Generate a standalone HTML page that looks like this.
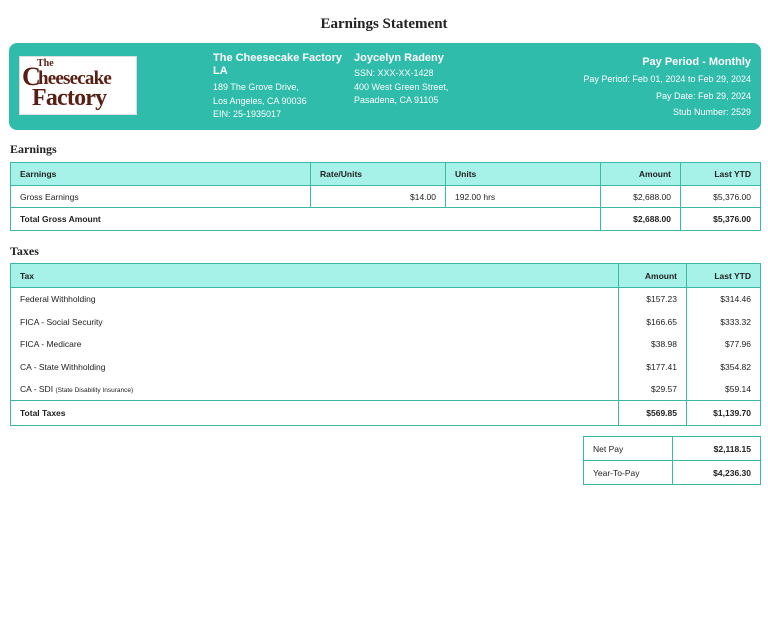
<!DOCTYPE html>
<html><head><meta charset="utf-8"><style>
*{margin:0;padding:0;box-sizing:border-box}
body{width:768px;height:639px;background:#fff;font-family:"Liberation Sans",sans-serif;color:#222;position:relative;overflow:hidden}
.abs{position:absolute}
h1{position:absolute;left:0;width:768px;top:16px;text-align:center;font:bold 15px "Liberation Serif",serif;color:#222}
.hdr{left:9px;top:43px;width:752px;height:87px;background:#2fbcaa;border-radius:8px;color:#fff}
.logo{left:10px;top:13px;width:118px;height:59px;background:#fff;border:1px solid #ddd;color:#5a1f14;font-family:"Liberation Serif",serif;font-weight:bold}
.w{font-size:9px;line-height:13.5px}
.wb{font-size:11px;font-weight:bold;line-height:13px}
h2{position:absolute;left:10px;font:bold 12px "Liberation Serif",serif;color:#222}
table{position:absolute;border-collapse:collapse;font-size:8.5px;color:#222}
td{border:1px solid #3bb8a6;padding:0 9px;white-space:nowrap}
th{border:1px solid #3bb8a6;padding:0 9px;background:#a6f1e8;font-weight:bold;text-align:left}
.r{text-align:right}
.b td{font-weight:bold}
.nb td{border-top:none;border-bottom:none}
</style></head><body>
<h1>Earnings Statement</h1>
<div class="abs hdr">
 <div class="abs logo">
  <div class="abs" style="left:17px;top:1px;font-size:10px">The</div>
  <div class="abs" style="left:2px;top:5px;font-size:26px;letter-spacing:-1px">C</div>
  <div class="abs" style="left:18px;top:11px;font-size:19px;letter-spacing:-0.8px">heesecake</div>
  <div class="abs" style="left:12px;top:28px;font-size:24px;letter-spacing:-0.8px">Factory</div>
 </div>
 <div class="abs" style="left:204px;top:9px;width:140px">
  <div class="wb">The Cheesecake Factory LA</div>
  <div class="w" style="margin-top:3px">189 The Grove Drive,<br>Los Angeles, CA 90036<br>EIN: 25-1935017</div>
 </div>
 <div class="abs" style="left:345px;top:9px">
  <div class="wb">Joycelyn Radeny</div>
  <div class="w" style="margin-top:2px">SSN: XXX-XX-1428<br>400 West Green Street,<br>Pasadena, CA 91105</div>
 </div>
 <div class="abs" style="right:10px;top:13px;text-align:right">
  <div class="wb">Pay Period - Monthly</div>
  <div class="w" style="margin-top:2px;line-height:16.5px">Pay Period: Feb 01, 2024 to Feb 29, 2024<br>Pay Date: Feb 29, 2024<br>Stub Number: 2529</div>
 </div>
</div>
<h2 style="top:142px">Earnings</h2>
<table style="left:10px;top:162px;width:751px">
<tr style="height:23px"><th style="width:300px">Earnings</th><th style="width:135px">Rate/Units</th><th style="width:155px">Units</th><th class="r" style="width:80px">Amount</th><th class="r">Last YTD</th></tr>
<tr style="height:22px"><td>Gross Earnings</td><td class="r">$14.00</td><td>192.00 hrs</td><td class="r">$2,688.00</td><td class="r">$5,376.00</td></tr>
<tr class="b" style="height:23px"><td colspan="3">Total Gross Amount</td><td class="r">$2,688.00</td><td class="r">$5,376.00</td></tr>
</table>
<h2 style="top:244px">Taxes</h2>
<table style="left:10px;top:263px;width:751px">
<tr style="height:24px"><th style="width:608px">Tax</th><th class="r" style="width:68px">Amount</th><th class="r">Last YTD</th></tr>
<tr class="nb" style="height:23px"><td>Federal Withholding</td><td class="r">$157.23</td><td class="r">$314.46</td></tr>
<tr class="nb" style="height:22px"><td>FICA - Social Security</td><td class="r">$166.65</td><td class="r">$333.32</td></tr>
<tr class="nb" style="height:23px"><td>FICA - Medicare</td><td class="r">$38.98</td><td class="r">$77.96</td></tr>
<tr class="nb" style="height:23px"><td>CA - State Withholding</td><td class="r">$177.41</td><td class="r">$354.82</td></tr>
<tr class="nb" style="height:22px"><td>CA - SDI <span style="font-size:6.5px">(State Disability Insurance)</span></td><td class="r">$29.57</td><td class="r">$59.14</td></tr>
<tr class="b" style="height:25px"><td style="border-top:1px solid #3bb8a6">Total Taxes</td><td class="r" style="border-top:1px solid #3bb8a6">$569.85</td><td class="r" style="border-top:1px solid #3bb8a6">$1,139.70</td></tr>
</table>
<table style="left:583px;top:436px;width:178px">
<tr style="height:24px"><td style="width:89px">Net Pay</td><td class="r" style="font-weight:bold">$2,118.15</td></tr>
<tr style="height:24px"><td>Year-To-Pay</td><td class="r" style="font-weight:bold">$4,236.30</td></tr>
</table>
</body></html>
